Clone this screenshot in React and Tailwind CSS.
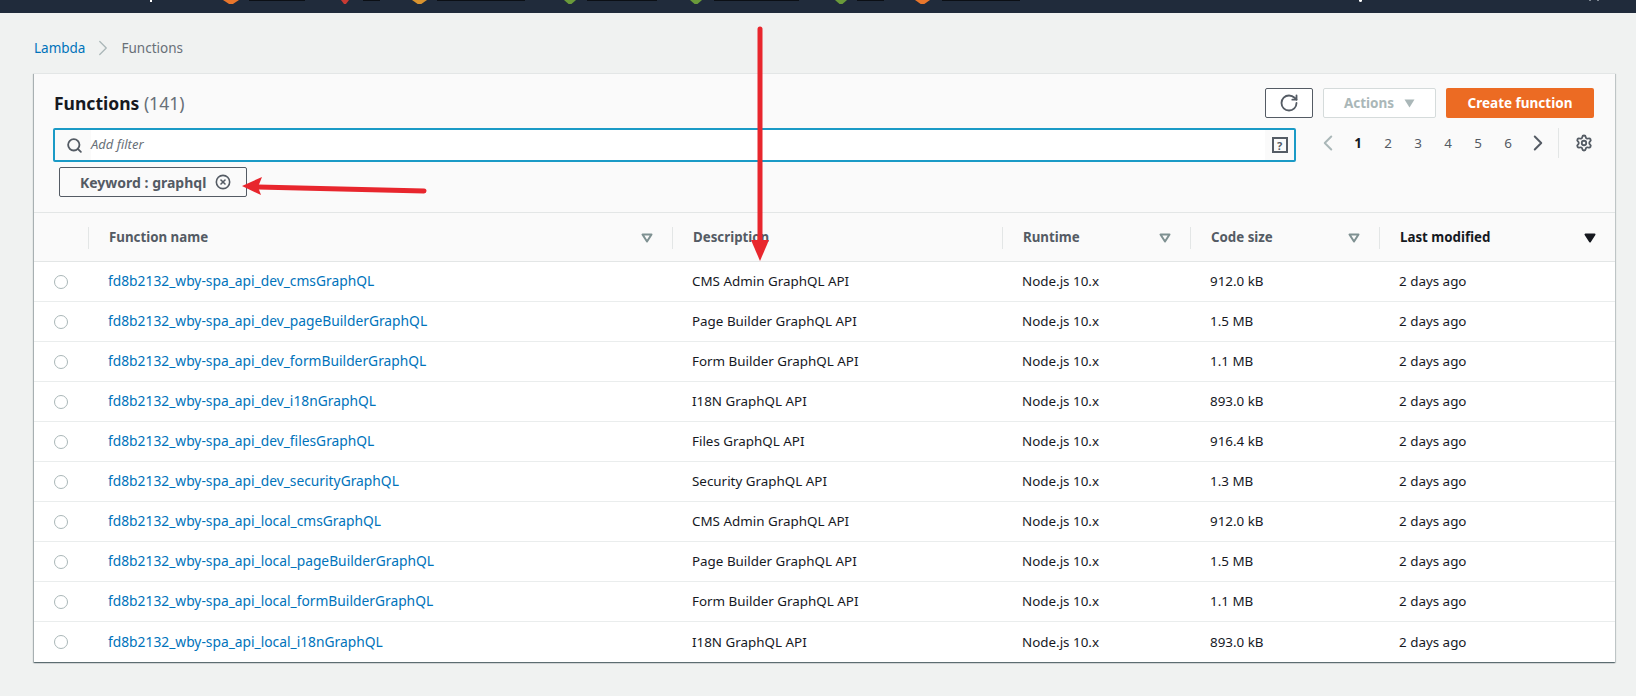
import React from 'react';
import { Search, RotateCw, ChevronLeft, ChevronRight, Settings, CircleX } from 'lucide-react';

const rows = [
  ['fd8b2132_wby-spa_api_dev_cmsGraphQL', 'CMS Admin GraphQL API', '912.0 kB'],
  ['fd8b2132_wby-spa_api_dev_pageBuilderGraphQL', 'Page Builder GraphQL API', '1.5 MB'],
  ['fd8b2132_wby-spa_api_dev_formBuilderGraphQL', 'Form Builder GraphQL API', '1.1 MB'],
  ['fd8b2132_wby-spa_api_dev_i18nGraphQL', 'I18N GraphQL API', '893.0 kB'],
  ['fd8b2132_wby-spa_api_dev_filesGraphQL', 'Files GraphQL API', '916.4 kB'],
  ['fd8b2132_wby-spa_api_dev_securityGraphQL', 'Security GraphQL API', '1.3 MB'],
  ['fd8b2132_wby-spa_api_local_cmsGraphQL', 'CMS Admin GraphQL API', '912.0 kB'],
  ['fd8b2132_wby-spa_api_local_pageBuilderGraphQL', 'Page Builder GraphQL API', '1.5 MB'],
  ['fd8b2132_wby-spa_api_local_formBuilderGraphQL', 'Form Builder GraphQL API', '1.1 MB'],
  ['fd8b2132_wby-spa_api_local_i18nGraphQL', 'I18N GraphQL API', '893.0 kB'],
];

const gridCols = 'grid grid-cols-[54px_584px_330px_188px_189px_1fr]';

function Caret({ filled }) {
  return (
    <svg width="12" height="10" viewBox="0 0 12 10" className="shrink-0">
      <path
        d="M1.5 1.5h9L6 8.5z"
        fill={filled ? '#16191f' : 'none'}
        stroke={filled ? '#16191f' : '#7f9192'}
        strokeWidth="2"
        strokeLinejoin="round"
      />
    </svg>
  );
}

function HeadCell({ label, active, noFilter }) {
  return (
    <div className="flex h-[22px] items-center justify-between border-l border-[#e3e6e6] pl-[20px] pr-[19px]">
      <span className={`text-[13.3px] font-bold ${active ? 'text-[#16191f]' : 'text-[#545b64]'}`}>{label}</span>
      {!noFilter && <Caret filled={active} />}
    </div>
  );
}

// the browser bookmarks are cut off by the top of the picture, only their last pixel row shows
function Bookmark({ icon, text, gap, margin }) {
  return (
    <div className={`flex items-start ${margin}`}>
      <div className={`h-[4px] [clip-path:polygon(0_0,100%_0,62%_100%,38%_100%)] ${icon}`} />
      <div className={`h-px bg-[#0b0f15] ${gap} ${text}`} />
    </div>
  );
}

export default function App() {
  return (
    <div className="relative h-[696px] overflow-hidden bg-[#f0f2f1] font-['Noto_Sans',sans-serif] text-[13.4px] text-[#16191f]">
      {/* top nav, mostly outside the picture */}
      <div className="flex h-[13px] items-start bg-[#202b3b]">
        <div className="ml-[150px] h-[2px] w-[2px] bg-white" />
        <Bookmark margin="ml-[71px]" icon="w-[16px] bg-[#e8762c]" gap="ml-[10px]" text="w-[56px]" />
        <Bookmark margin="ml-[36px]" icon="w-[8px] bg-[#c73a33]" gap="ml-[14px]" text="w-[17px]" />
        <Bookmark margin="ml-[32px]" icon="w-[15px] bg-[#d9932f]" gap="ml-[10px]" text="w-[88px]" />
        <Bookmark margin="ml-[39px]" icon="w-[12px] bg-[#6a9a3a]" gap="ml-[11px]" text="w-[70px]" />
        <Bookmark margin="ml-[33px]" icon="w-[12px] bg-[#6a9a3a]" gap="ml-[12px]" text="w-[85px]" />
        <Bookmark margin="ml-[36px]" icon="w-[12px] bg-[#6a9a3a]" gap="ml-[10px]" text="w-[27px]" />
        <Bookmark margin="ml-[31px]" icon="w-[15px] bg-[#e8762c]" gap="ml-[12px]" text="w-[78px]" />
        <div className="ml-[339px] h-[2px] w-[3px] rounded-b-full bg-white" />
        <div className="ml-[227px] h-px w-[2px] bg-[#7d8792]" />
        <div className="ml-[6px] h-px w-[2px] bg-[#7d8792]" />
      </div>

      <div className="pl-[34px] pr-[21px]">
        <nav className="mt-[25px] mb-[15px] flex h-[20px] items-center text-[13.5px]">
          <a className="text-[#0073bb]">Lambda</a>
          <ChevronRight className="mx-[5px] h-[26px] w-[26px] text-[#aab7b8]" strokeWidth={1.2} />
          <span className="text-[#687078]">Functions</span>
        </nav>

        <div className="bg-white shadow-[0_1px_1px_0_rgba(0,28,36,0.4),1px_1px_1px_0_rgba(0,28,36,0.15),-1px_1px_1px_0_rgba(0,28,36,0.25)]">
          <div className="h-[139px] border-t border-[#e3e6e6] bg-[#fafafa] pt-[14px]">
            <div className="flex h-[30px] items-center justify-between pl-[20px] pr-[21px]">
              <h1 className="mt-[2px] text-[17.5px] font-bold leading-none">
                Functions <span className="font-normal text-[#687078]">(141)</span>
              </h1>
              <div className="flex items-center gap-[10px]">
                <button className="flex h-[30px] w-[48px] items-center justify-center rounded-[2px] border border-[#545b64] bg-white">
                  <RotateCw className="h-[20px] w-[20px] text-[#545b64]" strokeWidth={2.2} />
                </button>
                <button className="flex h-[30px] w-[113px] items-center justify-center gap-[10px] rounded-[2px] border border-[#d5dbdb] bg-white text-[13.5px] font-bold text-[#aab7b8]">
                  Actions
                  <svg width="11" height="9" viewBox="0 0 11 9">
                    <path d="M0.5 0.5h10L5.5 8.5z" fill="#aab7b8" />
                  </svg>
                </button>
                <button className="flex h-[30px] w-[148px] items-center justify-center rounded-[2px] bg-[#ec6b23] text-[13.5px] font-bold text-white">
                  Create function
                </button>
              </div>
            </div>

            <div className="mt-[10px] flex items-start pl-[19px]">
              <div className="flex h-[34px] w-[1243px] items-stretch overflow-hidden rounded-[2px] border-2 border-[#1a9ac6] bg-white">
                <div className="flex w-[36px] items-center justify-center bg-[#fafafa]">
                  <Search className="ml-[2px] h-[17px] w-[17px] text-[#545b64]" strokeWidth={2.6} />
                </div>
                <span className="flex flex-1 items-center text-[13px] italic text-[#687078]">Add filter</span>
                <div className="flex w-[29px] items-center justify-center bg-[#fafafa]">
                  <span className="flex h-[16px] w-[16px] items-center justify-center border-2 border-[#545b64] text-[11px] font-bold leading-none text-[#545b64]">
                    ?
                  </span>
                </div>
              </div>
              <div className="ml-[17px] flex h-[30px] items-center">
                <ChevronLeft className="w-[30px] text-[#aab7b8]" size={26} strokeWidth={1.8} />
                <span className="w-[30px] text-center font-bold">1</span>
                {[2, 3, 4, 5, 6].map((n) => (
                  <span key={n} className="w-[30px] text-center text-[#545b64]">{n}</span>
                ))}
                <ChevronRight className="w-[30px] text-[#545b64]" size={26} strokeWidth={1.8} />
                <div className="ml-[5px] h-[30px] border-l border-[#e3e6e6]" />
                <Settings className="ml-[16px] h-[18px] w-[18px] text-[#545b64]" strokeWidth={2.4} />
              </div>
            </div>

            <div className="ml-[25px] mt-[5px] flex h-[30px] w-[188px] items-center rounded-[2px] border border-[#545b64] bg-[#fafafa] pl-[20px]">
              <span className="text-[14px] font-bold text-[#545b64]">Keyword : graphql</span>
              <CircleX className="ml-[9px] h-[16px] w-[16px] text-[#545b64]" strokeWidth={2.4} />
            </div>
          </div>

          <div className={`${gridCols} h-[50px] items-center border-y border-[#e3e6e6] bg-[#fafafa] pt-[1px]`}>
            <div />
            <HeadCell label="Function name" />
            <HeadCell label="Description" noFilter />
            <HeadCell label="Runtime" />
            <HeadCell label="Code size" />
            <HeadCell label="Last modified" active />
          </div>

          {rows.map(([name, desc, size], i) => (
            <div
              key={name}
              className={`${gridCols} h-[40px] items-center ${i < rows.length - 1 ? 'border-b border-[#eaeded]' : ''}`}
            >
              <div className="flex justify-center">
                <span className="h-[14px] w-[14px] rounded-full border border-[#aab7b8] bg-white" />
              </div>
              <a className="pl-[20px] text-[13.8px] text-[#0073bb]">{name}</a>
              <span className="pl-[20px]">{desc}</span>
              <span className="pl-[20px]">Node.js 10.x</span>
              <span className="pl-[20px]">{size}</span>
              <span className="pl-[20px]">2 days ago</span>
            </div>
          ))}
        </div>
      </div>

      {/* red annotation arrows drawn on top of the screenshot */}
      <svg className="pointer-events-none absolute inset-0" width="1636" height="696" viewBox="0 0 1636 696">
        <path d="M760 29L760 244" stroke="#e8262d" strokeWidth="5" strokeLinecap="round" fill="none" />
        <path d="M751 240L769 240L760 261Z" fill="#e8262d" />
        <path d="M424 191L258 187" stroke="#e8262d" strokeWidth="5" strokeLinecap="round" fill="none" />
        <path d="M242 186L262 177L258 187L261 195Z" fill="#e8262d" />
      </svg>
    </div>
  );
}
